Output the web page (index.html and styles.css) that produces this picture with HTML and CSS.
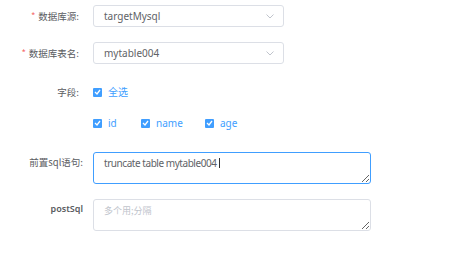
FILE: index.html
```html
<!DOCTYPE html>
<html lang="zh-CN">
<head>
<meta charset="utf-8">
<title>Form</title>
<link rel="stylesheet" href="styles.css">
</head>
<body>
<form class="form">
  <div class="row row-select">
    <label class="label"><span class="req">*</span>数据库源:</label>
    <div class="select">
      <span class="select-text">targetMysql</span>
      <svg class="arrow" width="8" height="5" viewBox="0 0 8 5"><polyline points="0.5,0.5 4,4 7.5,0.5" fill="none" stroke="#c0c4cc" stroke-width="1"/></svg>
    </div>
  </div>
  <div class="row row-select2">
    <label class="label"><span class="req">*</span>数据库表名:</label>
    <div class="select">
      <span class="select-text">mytable004</span>
      <svg class="arrow" width="8" height="5" viewBox="0 0 8 5"><polyline points="0.5,0.5 4,4 7.5,0.5" fill="none" stroke="#c0c4cc" stroke-width="1"/></svg>
    </div>
  </div>
  <div class="row row-all">
    <label class="label">字段:</label>
    <div class="checks">
      <span class="check"><span class="box"><svg width="7" height="6" viewBox="0 0 7 6"><polyline points="1,3 3,5 6,1" fill="none" stroke="#fff" stroke-width="1.3"/></svg></span><span class="check-text">全选</span></span>
    </div>
  </div>
  <div class="row row-fields">
    <span class="label"></span>
    <div class="checks">
      <span class="check w-id"><span class="box"><svg width="7" height="6" viewBox="0 0 7 6"><polyline points="1,3 3,5 6,1" fill="none" stroke="#fff" stroke-width="1.3"/></svg></span><span class="check-text">id</span></span>
      <span class="check w-name"><span class="box"><svg width="7" height="6" viewBox="0 0 7 6"><polyline points="1,3 3,5 6,1" fill="none" stroke="#fff" stroke-width="1.3"/></svg></span><span class="check-text">name</span></span>
      <span class="check"><span class="box"><svg width="7" height="6" viewBox="0 0 7 6"><polyline points="1,3 3,5 6,1" fill="none" stroke="#fff" stroke-width="1.3"/></svg></span><span class="check-text">age</span></span>
    </div>
  </div>
  <div class="row row-pre">
    <label class="label label-wide">前置sql语句:</label>
    <div class="ta-wrap">
      <textarea class="ta ta-focus">truncate table mytable004</textarea>
      <span class="caret"></span>
    </div>
  </div>
  <div class="row row-post">
    <label class="label label-wide label-latin">postSql</label>
    <div class="ta-wrap">
      <textarea class="ta" placeholder="多个用;分隔"></textarea>
    </div>
  </div>
</form>
</body>
</html>
```
FILE: styles.css
```css
* { box-sizing: border-box; }
html, body { margin: 0; padding: 0; background: #fff; }
body {
  font-family: "Noto Sans", "Noto Sans CJK SC", sans-serif;
  font-size: 10px;
  color: #606266;
}
.form {
  display: flex;
  flex-direction: column;
  padding-top: 5px;
}
.row {
  display: flex;
  align-items: flex-start;
}
.row-select { margin-bottom: 15px; }
.row-select2 { margin-bottom: 17px; }
.row-all { margin-bottom: 9px; }
.row-fields { margin-bottom: 18px; }
.row-pre { margin-bottom: 15px; }
.label {
  width: 79px;
  flex: none;
  margin-right: 14px;
  text-align: right;
  line-height: 22px;
  height: 22px;
  color: #5a5c61;
  font-family: "Noto Sans CJK SC", sans-serif;
  font-size: 9.5px;
}
.label-wide { width: 83px; margin-right: 10px; line-height: 20px; }
.label-latin { font-family: "Noto Sans", sans-serif; font-weight: 600; font-size: 9px; }
.req {
  color: #f56c6c;
  margin-right: 3px;
}
.select {
  width: 191px;
  height: 22px;
  border: 1px solid #dcdfe6;
  border-radius: 3px;
  display: flex;
  align-items: center;
  justify-content: space-between;
  padding: 0 9px 0 10px;
}
.select-text {
  color: #606266;
  line-height: 20px;
}
.arrow { display: block; }
.checks {
  display: flex;
  align-items: center;
  height: 22px;
}
.check {
  display: inline-flex;
  align-items: center;
  color: #409eff;
}
.w-id { width: 48px; }
.w-name { width: 64px; }
.box {
  width: 9px;
  height: 9px;
  border-radius: 1px;
  background: #409eff;
  display: inline-flex;
  align-items: center;
  justify-content: center;
  margin-right: 6px;
}
.box svg { display: block; }
.check-text { line-height: 22px; }
.ta-wrap {
  position: relative;
  width: 278px;
  height: 32px;
}
.ta {
  display: block;
  width: 278px;
  height: 32px;
  margin: 0;
  border: 1px solid #dcdfe6;
  border-radius: 3px;
  padding: 3px 10px;
  font-family: "Noto Sans", "Noto Sans CJK SC", sans-serif;
  font-size: 10px;
  letter-spacing: -0.45px;
  line-height: 15px;
  color: #606266;
  resize: vertical;
  outline: none;
  background: #fff;
}
.ta-focus { border-color: #409eff; }
.ta::placeholder { color: #c0c4cc; font-family: "Noto Sans CJK SC", sans-serif; font-size: 9px; letter-spacing: 0; }
.caret {
  position: absolute;
  left: 126px;
  top: 6px;
  width: 1px;
  height: 10px;
  background: #303133;
}
```
